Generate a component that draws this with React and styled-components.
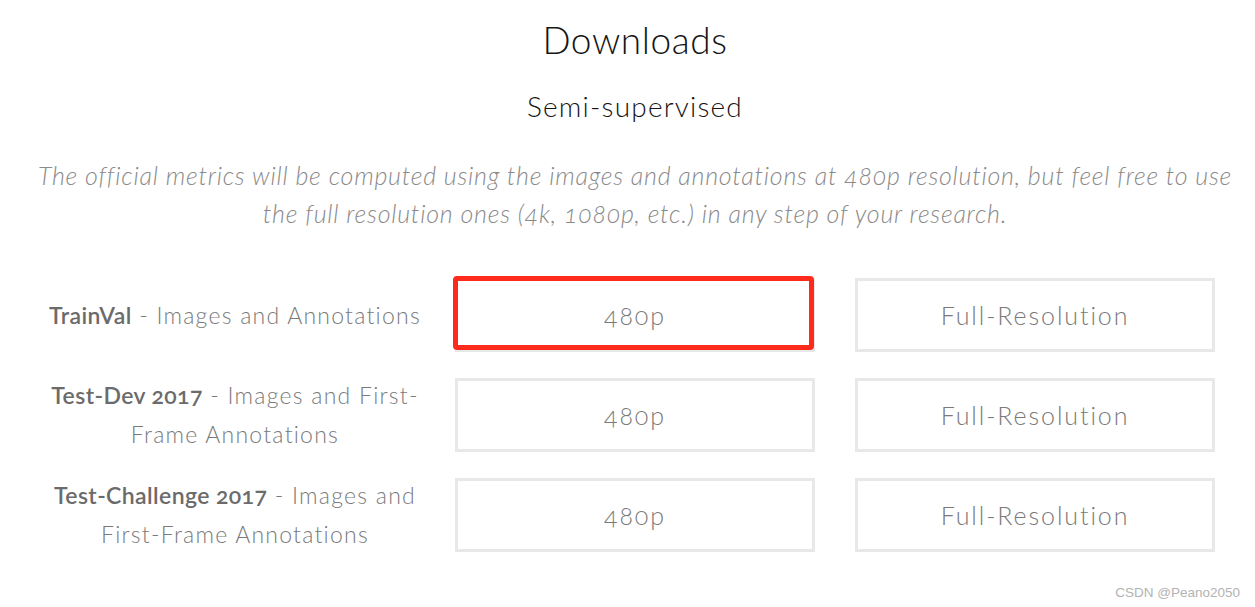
import React from 'react';
import styled, { createGlobalStyle } from 'styled-components';

const GlobalStyle = createGlobalStyle`
  body {
    margin: 0;
    background: #ffffff;
    font-family: Lato, "Open Sans", sans-serif;
  }
`;

const Page = styled.div`
  position: relative;
  width: 1255px;
  height: 607px;
  overflow: hidden;
  background: #fff;
`;

const Section = styled.section`
  width: 1200px;
  margin-left: 35px;
  text-align: center;
`;

const Title = styled.h1`
  margin: 18px 0 0;
  font-size: 37px;
  line-height: 44px;
  font-weight: 300;
  color: #151515;
  letter-spacing: 0.6px;
`;

const SubTitle = styled.h3`
  margin: 27px 0 0;
  font-size: 28px;
  line-height: 34px;
  font-weight: 300;
  color: #151515;
  letter-spacing: 1.2px;
`;

const Note = styled.p`
  margin: 33px 0 0;
  font-size: 25px;
  line-height: 38px;
  font-style: italic;
  font-weight: 300;
  color: #8a8a8a;
  white-space: nowrap;
  letter-spacing: 0.75px;
  font-variant-numeric: oldstyle-nums;
`;

const Table = styled.div`
  margin-top: 33px;
  display: flex;
  flex-direction: column;
`;

const Row = styled.div`
  display: grid;
  grid-template-columns: repeat(3, 400px);
  height: 100px;
  align-items: center;
`;

const Label = styled.div`
  padding: 0 10px;
  font-size: 23px;
  line-height: 39px;
  font-weight: 300;
  color: #7a7a7a;
  letter-spacing: 1.25px;
  white-space: nowrap;
  font-variant-numeric: oldstyle-nums;

  b {
    font-weight: 600;
    color: #6b6b6b;
    letter-spacing: 0.4px;
  }
`;

const Cell = styled.div`
  position: relative;
  padding: 0 20px;
`;

const DownloadButton = styled.a`
  display: flex;
  align-items: center;
  justify-content: center;
  box-sizing: border-box;
  height: 74px;
  border: 3px solid #e8e8e8;
  font-size: 25px;
  font-weight: 300;
  color: #7a7a7a;
  letter-spacing: 1.9px;
  text-decoration: none;
  font-variant-numeric: oldstyle-nums;
  cursor: pointer;
`;

const Highlight = styled.div`
  position: absolute;
  left: 18px;
  top: -2px;
  width: 361px;
  height: 74px;
  box-sizing: border-box;
  border: 5px solid #fe2a1b;
  border-radius: 4px;
  pointer-events: none;
`;

const Watermark = styled.div`
  position: absolute;
  right: 15px;
  bottom: 7px;
  font-family: "Liberation Sans", Arial, sans-serif;
  font-size: 13.5px;
  color: #b3b3b3;
`;

const rows = [
  { name: 'TrainVal', desc: ['Images and Annotations'], marked: true },
  { name: 'Test-Dev 2017', desc: ['Images and First-', 'Frame Annotations'] },
  { name: 'Test-Challenge 2017', desc: ['Images and', 'First-Frame Annotations'] },
];

export default function App() {
  return (
    <Page>
      <GlobalStyle />
      <Section>
        <Title>Downloads</Title>
        <SubTitle>Semi-supervised</SubTitle>
        <Note>
          The official metrics will be computed using the images and annotations at 480p resolution, but feel free to use
          <br />
          the full resolution ones (4k, 1080p, etc.) in any step of your research.
        </Note>
        <Table>
          {rows.map((r) => (
            <Row key={r.name}>
              <Label>
                <b>{r.name}</b> - {r.desc[0]}
                {r.desc[1] && (
                  <>
                    <br />
                    {r.desc[1]}
                  </>
                )}
              </Label>
              <Cell>
                <DownloadButton>480p</DownloadButton>
                {r.marked && <Highlight />}
              </Cell>
              <Cell>
                <DownloadButton>Full-Resolution</DownloadButton>
              </Cell>
            </Row>
          ))}
        </Table>
      </Section>
      <Watermark>CSDN @Peano2050</Watermark>
    </Page>
  );
}
